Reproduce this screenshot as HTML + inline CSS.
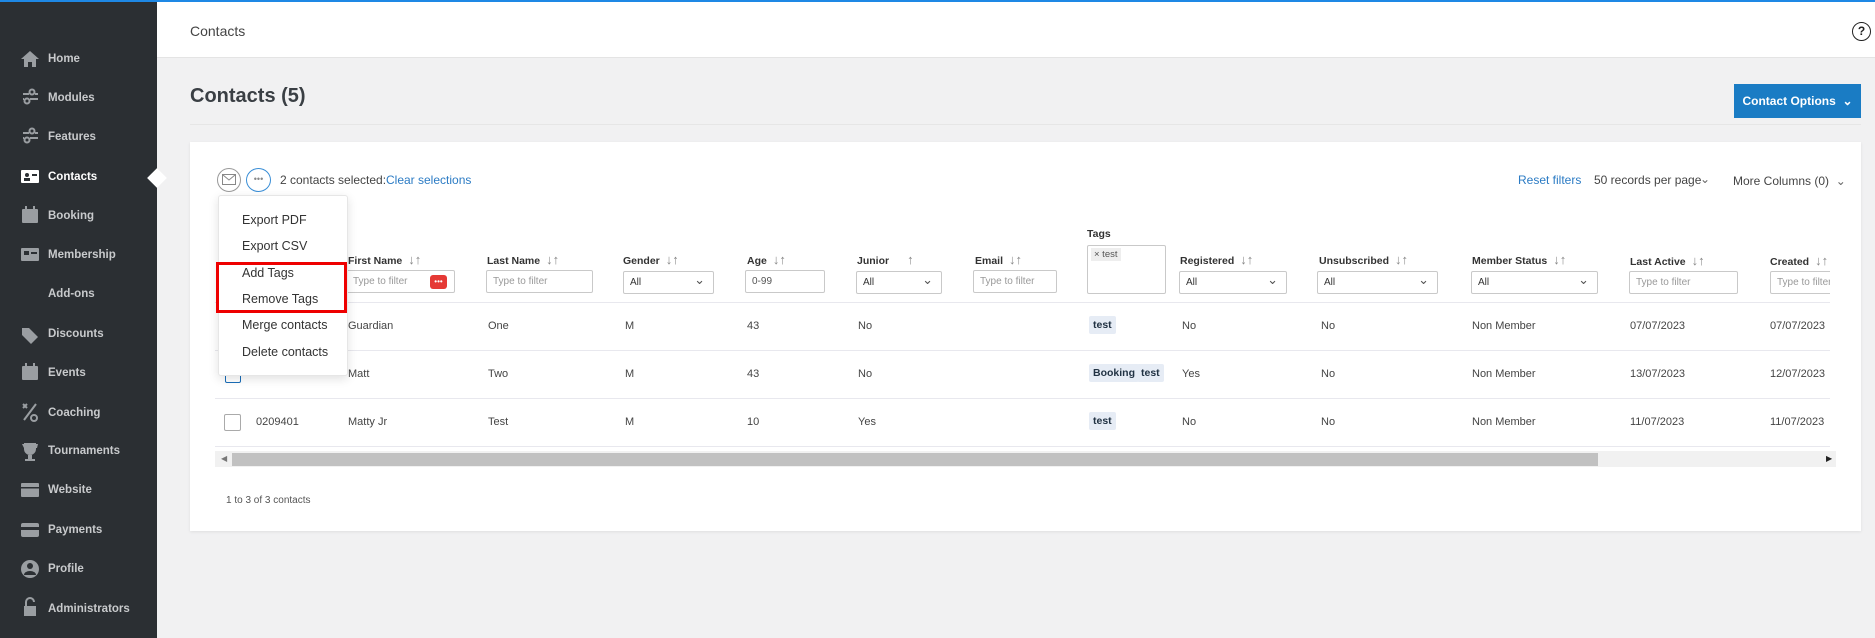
<!DOCTYPE html>
<html><head><meta charset="utf-8"><style>
*{margin:0;padding:0;box-sizing:border-box}
body{width:1875px;height:638px;position:relative;overflow:hidden;background:#f1f1f2;font-family:"Liberation Sans",sans-serif;color:#333;font-size:12px}
.a{position:absolute;white-space:nowrap}
#top{left:0;top:0;width:1875px;height:2px;background:#1e88e5}
#side{left:0;top:2px;width:157px;height:636px;background:#2b2f33}
.nav{position:absolute;left:48px;color:#c8cacc;font-size:11.5px;font-weight:bold}
#hdr{left:157px;top:2px;width:1718px;height:56px;background:#fff;border-bottom:1px solid #e4e4e4}
.card{left:190px;top:142px;width:1671px;height:389px;background:#fff;box-shadow:0 1px 3px rgba(0,0,0,.08)}
.th{font-size:10.5px;font-weight:bold;color:#333}
.srt{color:#888;font-size:13px;font-weight:bold;margin-left:6px}
.inp{position:absolute;height:23px;border:1px solid #c9c9c9;border-radius:2px;font-size:10px;color:#999;padding:5px 6px;background:#fff}
.sel{color:#333}
.sel:after{content:"⌄";position:absolute;right:8px;top:0px;font-size:13px;color:#555}
.td{font-size:11px;color:#444}
.line{position:absolute;left:215px;width:1615px;height:1px;background:#e8e8ee}
.chip{position:absolute;background:#e6ecf5;color:#234;font-size:10.5px;font-weight:bold;padding:3px 4px;border-radius:2px}
.mi{position:absolute;left:242px;font-size:12.5px;color:#333}
</style></head><body>
<div id="side" class="a"></div>
<div id="top" class="a"></div>

<svg class="a" style="left:20px;top:50px" width="20" height="570" viewBox="0 0 20 570" fill="#9a9ea2">
<path d="M10 1 L19 9 L16 9 L16 17 L12 17 L12 12 L8 12 L8 17 L4 17 L4 9 L1 9Z"/>
<g fill="none" stroke="#9a9ea2" stroke-width="2"><circle cx="12" cy="42" r="2.5"/><circle cx="7" cy="51" r="2.5"/><path d="M3 44h6M15 44h3M3 49h1M10 49h8"/>
<circle cx="12" cy="81" r="2.5"/><circle cx="7" cy="90" r="2.5"/><path d="M3 83h6M15 83h3M3 88h1M10 88h8"/></g>
<rect x="1" y="120" width="18" height="13" rx="1" fill="#fff"/><circle cx="7" cy="125" r="2" fill="#2b2f33"/><rect x="4" y="128" width="6" height="3" fill="#2b2f33"/><rect x="12" y="124" width="5" height="2" fill="#2b2f33"/>
<rect x="2" y="159" width="16" height="14" rx="1"/><rect x="5" y="156" width="2" height="4"/><rect x="13" y="156" width="2" height="4"/>
<rect x="1" y="198" width="18" height="13" rx="1"/><rect x="4" y="201" width="5" height="4" fill="#2b2f33"/><rect x="11" y="202" width="6" height="2" fill="#2b2f33"/>
<path d="M2 278 L9 278 L18 287 L11 294 L2 285Z"/>
<rect x="2" y="316" width="16" height="14" rx="1"/><rect x="5" y="313" width="2" height="4"/><rect x="13" y="313" width="2" height="4"/>
<g stroke="#9a9ea2" stroke-width="2" fill="none"><path d="M4 370 L16 354"/><circle cx="14" cy="368" r="3"/><path d="M3 354l4 4M7 354l-4 4"/></g>
<path d="M4 393h12v6a6 6 0 0 1-12 0z M8 405h4v4h3v2H5v-2h3z"/><path d="M2 394h3v4h-1zM15 394h3l-1 4h-2z"/>
<rect x="1" y="433" width="18" height="14" rx="1"/><rect x="1" y="437" width="18" height="1.5" fill="#2b2f33"/>
<rect x="1" y="473" width="18" height="14" rx="2"/><rect x="1" y="477" width="18" height="3" fill="#2b2f33"/>
<circle cx="10" cy="519" r="9"/><circle cx="10" cy="516" r="3" fill="#2b2f33"/><path d="M4 525a6 4 0 0 1 12 0z" fill="#2b2f33"/>
<path d="M4 556h12v10H4z"/><path d="M6 556v-4a4 4 0 0 1 8 0" fill="none" stroke="#9a9ea2" stroke-width="2"/>
</svg>
<div class="nav" style="top:53px">Home</div>
<div class="nav" style="top:92px">Modules</div>
<div class="nav" style="top:131px">Features</div>
<div class="nav" style="top:171px;color:#fff">Contacts</div>
<div class="a" style="left:150px;top:171px;width:14px;height:14px;background:#fff;transform:rotate(45deg)"></div>
<div class="nav" style="top:210px">Booking</div>
<div class="nav" style="top:249px">Membership</div>
<div class="nav" style="top:288px">Add-ons</div>
<div class="nav" style="top:328px">Discounts</div>
<div class="nav" style="top:367px">Events</div>
<div class="nav" style="top:407px">Coaching</div>
<div class="nav" style="top:445px">Tournaments</div>
<div class="nav" style="top:484px">Website</div>
<div class="nav" style="top:524px">Payments</div>
<div class="nav" style="top:563px">Profile</div>
<div class="nav" style="top:603px">Administrators</div>

<div id="hdr" class="a"></div>
<div class="a" style="left:190px;top:23px;font-size:14px;color:#444">Contacts</div>
<div class="a" style="left:1852px;top:22px;width:19px;height:19px;border:1.5px solid #222;border-radius:50%;font-size:12px;font-weight:bold;text-align:center;line-height:16px;color:#222">?</div>

<div class="a" style="left:190px;top:85px;font-size:20px;font-weight:bold;color:#3a3f44">Contacts (5)</div>
<div class="a" style="left:190px;top:124px;width:1671px;height:1px;background:#e6e6e6"></div>
<div class="a" style="left:1734px;top:84px;width:127px;height:34px;background:#1a7cc4;color:#fff;font-size:12px;font-weight:bold;text-align:center;line-height:34px">Contact Options &nbsp;⌄</div>

<div class="a card"></div>

<div class="a" style="left:217px;top:168px;width:24px;height:24px;border:1px solid #999;border-radius:50%"></div>
<svg class="a" style="left:222px;top:174px" width="14" height="11"><rect x="0.5" y="0.5" width="13" height="10" fill="none" stroke="#888"/><path d="M1 1l6 5 6-5" fill="none" stroke="#888"/></svg>
<div class="a" style="left:246px;top:168px;width:25px;height:24px;border:1px solid #3a8ed6;border-radius:50%;font-size:9px;color:#888;text-align:center;line-height:20px">•••</div>
<div class="a" style="left:280px;top:173px;font-size:12px;color:#444">2 contacts selected:</div>
<div class="a" style="left:386px;top:173px;font-size:12px;color:#2b7bc4">Clear selections</div>
<div class="a" style="left:1518px;top:173px;font-size:12px;color:#2b7bc4">Reset filters</div>
<div class="a" style="left:1594px;top:173px;font-size:12px;color:#444">50 records per page</div>
<div class="a" style="left:1700px;top:172px;font-size:12px;color:#666">⌄</div>
<div class="a" style="left:1733px;top:174px;font-size:12px;color:#444">More Columns (0) &nbsp;<span style="color:#666">⌄</span></div>

<div class="a th" style="left:348px;top:252px">First Name<span class="srt">↓↑</span></div>
<div class="a th" style="left:487px;top:252px">Last Name<span class="srt">↓↑</span></div>
<div class="a th" style="left:623px;top:252px">Gender<span class="srt">↓↑</span></div>
<div class="a th" style="left:747px;top:252px">Age<span class="srt">↓↑</span></div>
<div class="a th" style="left:857px;top:252px">Junior<span class="srt" style="margin-left:18px">↑</span></div>
<div class="a th" style="left:975px;top:252px">Email<span class="srt">↓↑</span></div>
<div class="a th" style="left:1087px;top:228px">Tags</div>
<div class="a th" style="left:1180px;top:252px">Registered<span class="srt">↓↑</span></div>
<div class="a th" style="left:1319px;top:252px">Unsubscribed<span class="srt">↓↑</span></div>
<div class="a th" style="left:1472px;top:252px">Member Status<span class="srt">↓↑</span></div>
<div class="a th" style="left:1630px;top:253px">Last Active<span class="srt">↓↑</span></div>
<div class="a th" style="left:1770px;top:253px">Created<span class="srt">↓↑</span></div>

<div class="inp" style="left:346px;top:270px;width:109px">Type to filter</div>
<div class="a" style="left:430px;top:275px;width:17px;height:14px;background:#e53935;border-radius:3px;color:#fff;font-size:8px;text-align:center;line-height:13px">•••</div>
<div class="inp" style="left:486px;top:270px;width:107px">Type to filter</div>
<div class="inp sel" style="left:623px;top:271px;width:91px">All</div>
<div class="inp" style="left:745px;top:270px;width:80px;color:#555">0-99</div>
<div class="inp sel" style="left:856px;top:271px;width:86px">All</div>
<div class="inp" style="left:973px;top:270px;width:84px">Type to filter</div>
<div class="inp" style="left:1087px;top:245px;width:79px;height:49px;padding:3px"><span style="background:#eee;color:#555;padding:1px 3px;font-size:9.5px">× test</span></div>
<div class="inp sel" style="left:1179px;top:271px;width:108px">All</div>
<div class="inp sel" style="left:1317px;top:271px;width:121px">All</div>
<div class="inp sel" style="left:1471px;top:271px;width:127px">All</div>
<div class="inp" style="left:1629px;top:271px;width:109px">Type to filter</div>
<div class="a" style="left:1770px;top:271px;width:60px;height:23px;overflow:hidden"><div class="inp" style="left:0;top:0;width:80px">Type to filter</div></div>

<div class="line" style="top:302px"></div>
<div class="line" style="top:350px"></div>
<div class="line" style="top:398px"></div>
<div class="line" style="top:446px"></div>

<div class="a td" style="left:348px;top:320px">Guardian</div><div class="a td" style="left:488px;top:320px">One</div><div class="a td" style="left:625px;top:320px">M</div><div class="a td" style="left:747px;top:320px">43</div><div class="a td" style="left:858px;top:320px">No</div><div class="chip" style="left:1089px;top:316px">test</div><div class="a td" style="left:1182px;top:320px">No</div><div class="a td" style="left:1321px;top:320px">No</div><div class="a td" style="left:1472px;top:320px">Non Member</div><div class="a td" style="left:1630px;top:320px">07/07/2023</div><div class="a td" style="left:1770px;top:320px">07/07/2023</div>
<div class="a" style="left:225px;top:367px;width:16px;height:16px;border:1.5px solid #1a6db8;border-radius:2px"></div>
<div class="a td" style="left:348px;top:368px">Matt</div><div class="a td" style="left:488px;top:368px">Two</div><div class="a td" style="left:625px;top:368px">M</div><div class="a td" style="left:747px;top:368px">43</div><div class="a td" style="left:858px;top:368px">No</div><div class="chip" style="left:1089px;top:364px">Booking</div><div class="chip" style="left:1137px;top:364px">test</div><div class="a td" style="left:1182px;top:368px">Yes</div><div class="a td" style="left:1321px;top:368px">No</div><div class="a td" style="left:1472px;top:368px">Non Member</div><div class="a td" style="left:1630px;top:368px">13/07/2023</div><div class="a td" style="left:1770px;top:368px">12/07/2023</div>
<div class="a" style="left:224px;top:414px;width:17px;height:17px;border:1px solid #aaa;border-radius:2px"></div>
<div class="a td" style="left:256px;top:416px">0209401</div><div class="a td" style="left:348px;top:416px">Matty Jr</div><div class="a td" style="left:488px;top:416px">Test</div><div class="a td" style="left:625px;top:416px">M</div><div class="a td" style="left:747px;top:416px">10</div><div class="a td" style="left:858px;top:416px">Yes</div><div class="chip" style="left:1089px;top:412px">test</div><div class="a td" style="left:1182px;top:416px">No</div><div class="a td" style="left:1321px;top:416px">No</div><div class="a td" style="left:1472px;top:416px">Non Member</div><div class="a td" style="left:1630px;top:416px">11/07/2023</div><div class="a td" style="left:1770px;top:416px">11/07/2023</div>

<div class="a" style="left:215px;top:451px;width:1621px;height:16px;background:#f1f1f1"></div>
<div class="a" style="left:232px;top:453px;width:1366px;height:13px;background:#c1c1c1"></div>
<div class="a" style="left:221px;top:454px;font-size:8px;color:#777">◀</div>
<div class="a" style="left:1826px;top:454px;font-size:8px;color:#222">▶</div>
<div class="a" style="left:226px;top:495px;font-size:10px;color:#555">1 to 3 of 3 contacts</div>

<div class="a" style="left:218px;top:195px;width:130px;height:181px;background:#fff;border:1px solid #e6e6e6;border-radius:3px;box-shadow:0 3px 10px rgba(0,0,0,.12)"></div>
<div class="mi" style="top:213px">Export PDF</div>
<div class="mi" style="top:239px">Export CSV</div>
<div class="mi" style="top:266px">Add Tags</div>
<div class="mi" style="top:292px">Remove Tags</div>
<div class="mi" style="top:318px">Merge contacts</div>
<div class="mi" style="top:345px">Delete contacts</div>
<div class="a" style="left:216px;top:262px;width:131px;height:51px;border:3px solid #ee0000"></div>
</body></html>
